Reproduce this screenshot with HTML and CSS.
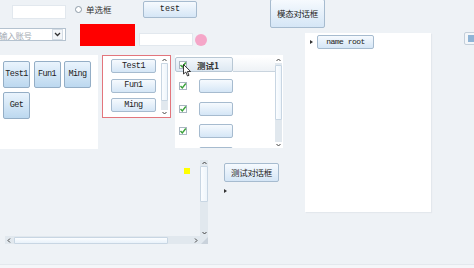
FILE: index.html
```html
<!DOCTYPE html>
<html lang="zh">

<head>
    <meta charset="UTF-8">
    <title>Demo Dialog</title>
    <link rel="stylesheet" href="styles.css">
</head>

<body>
    <div class="form">
        <!-- top row controls -->
        <div class="edit name-edit"></div>

        <label class="radio">
            <span class="radio-dot"></span>
            <span>单选框</span>
        </label>

        <button class="btn test-btn">test</button>
        <button class="btn modal-btn">模态对话框</button>

        <div class="combo">
            <span class="combo-text">输入账号</span>
            <span class="combo-arrow">
                <svg width="7" height="5" viewBox="0 0 7 5"><path d="M1 1 L3.5 3.5 L6 1" fill="none" stroke="#333" stroke-width="1.3"/></svg>
            </span>
        </div>

        <div class="red-box"></div>
        <div class="edit pass-edit"></div>
        <div class="pink-dot"></div>

        <!-- tile buttons -->
        <div class="tile-panel">
            <button class="btn tile">Test1</button>
            <button class="btn tile">Fun1</button>
            <button class="btn tile">Ming</button>
            <button class="btn tile">Get</button>
        </div>

        <!-- list box with red border -->
        <div class="listbox">
            <div class="list-items">
                <button class="btn list-item">Test1</button>
                <button class="btn list-item">Fun1</button>
                <button class="btn list-item">Ming</button>
            </div>
            <div class="vscroll">
                <span class="arrow"><svg width="5" height="4" viewBox="0 0 5 4"><path d="M0.5 3 L2.5 1 L4.5 3" fill="none" stroke="#444" stroke-width="1"/></svg></span>
                <div class="track"><div class="thumb thumb-big"></div></div>
                <span class="arrow"><svg width="5" height="4" viewBox="0 0 5 4"><path d="M0.5 1 L2.5 3 L4.5 1" fill="none" stroke="#444" stroke-width="1"/></svg></span>
            </div>
        </div>

        <!-- check list -->
        <div class="checklist">
            <div class="check-body">
                <div class="check-header">
                    <div class="header-cell">
                        <span class="check"><svg width="8" height="8" viewBox="0 0 8 8"><path d="M1.5 4 L3.3 6 L6.8 1.5" fill="none" stroke="#3aa23a" stroke-width="1.4"/></svg></span>
                        <span class="header-text">测试1</span>
                    </div>
                    <div class="header-rest"></div>
                </div>
                <div class="check-row">
                    <span class="check"><svg width="8" height="8" viewBox="0 0 8 8"><path d="M1.5 4 L3.3 6 L6.8 1.5" fill="none" stroke="#3aa23a" stroke-width="1.4"/></svg></span>
                    <button class="btn row-btn"></button>
                </div>
                <div class="check-row">
                    <span class="check"><svg width="8" height="8" viewBox="0 0 8 8"><path d="M1.5 4 L3.3 6 L6.8 1.5" fill="none" stroke="#3aa23a" stroke-width="1.4"/></svg></span>
                    <button class="btn row-btn"></button>
                </div>
                <div class="check-row">
                    <span class="check"><svg width="8" height="8" viewBox="0 0 8 8"><path d="M1.5 4 L3.3 6 L6.8 1.5" fill="none" stroke="#3aa23a" stroke-width="1.4"/></svg></span>
                    <button class="btn row-btn"></button>
                </div>
                <div class="check-row">
                    <span class="check"></span>
                    <button class="btn row-btn"></button>
                </div>
            </div>
            <div class="vscroll">
                <span class="arrow"><svg width="5" height="4" viewBox="0 0 5 4"><path d="M0.5 3 L2.5 1 L4.5 3" fill="none" stroke="#444" stroke-width="1"/></svg></span>
                <div class="track"><div class="thumb thumb-mid"></div></div>
                <span class="arrow"><svg width="5" height="4" viewBox="0 0 5 4"><path d="M0.5 1 L2.5 3 L4.5 1" fill="none" stroke="#444" stroke-width="1"/></svg></span>
            </div>
        </div>

        <!-- mouse pointer over the header checkbox -->
        <svg class="pointer" width="9" height="13" viewBox="0 0 9 13">
            <path d="M0.5 0.5 L0.5 10 L2.8 8 L4.5 12 L6 11.3 L4.4 7.5 L7.6 7.5 Z" fill="#fff" stroke="#222" stroke-width="0.9"/>
        </svg>

        <!-- scroll area -->
        <div class="scroll-area">
            <div class="scroll-content">
                <span class="yellow-dot"></span>
            </div>
            <div class="vscroll">
                <span class="arrow"><svg width="5" height="4" viewBox="0 0 5 4"><path d="M0.5 3 L2.5 1 L4.5 3" fill="none" stroke="#444" stroke-width="1"/></svg></span>
                <div class="track"><div class="thumb thumb-top"></div></div>
                <span class="arrow"><svg width="5" height="4" viewBox="0 0 5 4"><path d="M0.5 1 L2.5 3 L4.5 1" fill="none" stroke="#444" stroke-width="1"/></svg></span>
            </div>
            <div class="hscroll">
                <span class="arrow"><svg width="4" height="5" viewBox="0 0 4 5"><path d="M3 0.5 L1 2.5 L3 4.5" fill="none" stroke="#444" stroke-width="1"/></svg></span>
                <div class="track"><div class="thumb thumb-wide"></div></div>
                <span class="arrow"><svg width="4" height="5" viewBox="0 0 4 5"><path d="M1 0.5 L3 2.5 L1 4.5" fill="none" stroke="#444" stroke-width="1"/></svg></span>
            </div>
            <div class="grip">
                <svg width="7" height="7" viewBox="0 0 7 7"><path d="M7 0 L7 7 L0 7 Z" fill="#c9d2db"/></svg>
            </div>
        </div>

        <button class="btn dialog-btn">测试对话框</button>
        <span class="tri tri-dialog"></span>

        <!-- tree -->
        <div class="tree">
            <div class="tree-row">
                <span class="tri"></span>
                <button class="btn tree-node">name root</button>
            </div>
        </div>

        <div class="side-btn"><span></span></div>

        <div class="status"></div>
    </div>
</body>

</html>
```

FILE: styles.css
```css
/* Global Styles */
body {
    margin: 0;
    padding: 0;
    background-color: #eef2f6;
    font-family: "Noto Sans CJK SC", sans-serif;
    color: #222;
    overflow: hidden;
}

.form {
    position: relative;
    width: 474px;
    height: 268px;
    overflow: hidden;
}

.form > * {
    position: absolute;
    box-sizing: border-box;
}

/* Common controls */
.btn {
    box-sizing: border-box;
    margin: 0;
    padding: 0;
    border: 1px solid #a6bbcf;
    border-radius: 2px;
    background: linear-gradient(#f6fafe, #d5e6f6);
    font-family: "Liberation Mono", monospace;
    font-size: 8.5px;
    color: #222;
    letter-spacing: -0.5px;
    line-height: 1;
}

.edit {
    background-color: #fff;
    border: 1px solid #e2e8ee;
}

.name-edit {
    left: 12px;
    top: 5px;
    width: 54px;
    height: 14px;
}

.pass-edit {
    left: 139px;
    top: 33px;
    width: 54px;
    height: 13px;
}

.radio {
    left: 75px;
    top: 3px;
    display: flex;
    align-items: center;
    gap: 4px;
    font-size: 8.5px;
    color: #333;
}

.radio-dot {
    width: 7px;
    height: 7px;
    border-radius: 50%;
    border: 1px solid #8c9aa6;
    background-color: #fff;
    box-sizing: border-box;
}

.test-btn {
    left: 143px;
    top: 1px;
    width: 54px;
    height: 17px;
    letter-spacing: 0;
}

.modal-btn {
    left: 270px;
    top: -1px;
    width: 55px;
    height: 29px;
    font-family: "Noto Sans CJK SC", sans-serif;
    letter-spacing: -0.3px;
}

.combo {
    left: -2px;
    top: 28px;
    width: 68px;
    height: 13px;
    background-color: #fff;
    border: 1px solid #b4c2cf;
    display: flex;
    align-items: center;
    justify-content: space-between;
    font-size: 8.5px;
    color: #a3abb3;
}

.combo-text {
    letter-spacing: -0.3px;
}

.combo-arrow {
    display: flex;
    align-items: center;
    justify-content: center;
    width: 9px;
    height: 9px;
    margin-right: 2px;
    border: 1px solid #d5dde5;
    background-color: #f3f6f9;
}

.red-box {
    left: 80px;
    top: 24px;
    width: 55px;
    height: 22px;
    background-color: #ff0000;
}

.pink-dot {
    left: 195px;
    top: 34px;
    width: 12px;
    height: 12px;
    border-radius: 50%;
    background-color: #f5a6c8;
}

/* Tile panel */
.tile-panel {
    left: 0;
    top: 55px;
    width: 98px;
    height: 94px;
    background-color: #fff;
    padding: 6px 0 0 3px;
    display: flex;
    flex-wrap: wrap;
    align-content: flex-start;
    gap: 4px 3.5px;
}

.tile {
    width: 27px;
    height: 27px;
    border-color: #94aec6;
    background: linear-gradient(#eaf4fd, #bcd8ef);
    letter-spacing: -0.6px;
}

/* Red list box */
.listbox {
    left: 102px;
    top: 55px;
    width: 69px;
    height: 63px;
    background-color: #fff;
    border: 1px solid #e3757c;
    display: flex;
    padding: 1px 2px 1px 0;
}

.list-items {
    flex: 1;
    display: flex;
    flex-direction: column;
    gap: 5.5px;
    padding: 2px 0 0 8px;
}

.list-item {
    width: 45px;
    height: 14px;
}

/* Scroll bars */
.vscroll {
    width: 7px;
    display: flex;
    flex-direction: column;
    align-items: center;
    background-color: #e1e8ee;
}

.hscroll {
    height: 8px;
    display: flex;
    align-items: center;
    background-color: #e1e8ee;
}

.arrow {
    display: flex;
    align-items: center;
    justify-content: center;
    flex: none;
    width: 7px;
    height: 6px;
    background-color: #fff;
}

.hscroll .arrow {
    width: 6px;
    height: 8px;
    background-color: transparent;
}

.vscroll .track {
    flex: 1;
    width: 100%;
}

.hscroll .track {
    flex: 1;
    height: 100%;
    display: flex;
    align-items: center;
}

.thumb {
    box-sizing: border-box;
    background: linear-gradient(90deg, #fbfdff, #eef5fb);
    border: 1px solid #c8d6e3;
    border-radius: 1px;
}

.thumb-big {
    height: 80%;
}

.thumb-mid {
    height: 70%;
    margin-top: 2px;
}

.thumb-top {
    height: 57%;
}

.thumb-wide {
    width: 86%;
    height: 7px;
    margin-left: 1px;
    background: linear-gradient(#fbfdff, #e9f2fa);
}

/* Check list */
.checklist {
    left: 175px;
    top: 55px;
    width: 108px;
    height: 93px;
    background-color: #fff;
    display: flex;
    padding-top: 2px;
}

.checklist .vscroll {
    margin-right: 1px;
}

.check-body {
    flex: 1;
    display: flex;
    flex-direction: column;
    gap: 8.5px;
    overflow: hidden;
}

.check-header {
    display: flex;
    height: 15px;
    flex: none;
    margin-bottom: -1.5px;
}

.header-cell {
    width: 58px;
    display: flex;
    align-items: center;
    gap: 10px;
    padding-left: 3px;
    box-sizing: border-box;
    border: 1px solid #b8c7d4;
    border-radius: 2px;
    background: linear-gradient(#f4f8fc, #dde8f2);
}

.header-text {
    font-size: 8.5px;
    font-weight: bold;
    color: #333;
}

.header-rest {
    flex: 1;
    border-bottom: 1px solid #c9d4de;
    background: linear-gradient(#ffffff, #eef2f6);
}

.check-row {
    display: flex;
    align-items: center;
    gap: 12px;
    padding-left: 4px;
    flex: none;
}

.check {
    width: 8px;
    height: 8px;
    flex: none;
    box-sizing: border-box;
    border: 1px solid #a9b6c1;
    background-color: #fff;
    display: flex;
}

.check svg {
    margin: -1px;
}

.row-btn {
    width: 34px;
    height: 14px;
}

.pointer {
    left: 183px;
    top: 64px;
}

/* Scroll area */
.scroll-area {
    left: 5px;
    top: 160px;
    width: 203px;
    height: 84px;
    display: grid;
    grid-template-columns: 1fr 8px;
    grid-template-rows: 1fr 8px;
}

.scroll-area .vscroll {
    width: 8px;
}

.scroll-area .arrow {
    width: 8px;
    background-color: transparent;
}

.scroll-content {
    display: flex;
    justify-content: flex-end;
    align-items: flex-start;
}

.yellow-dot {
    width: 6px;
    height: 6px;
    margin: 8px 10px 0 0;
    background-color: #ffff00;
}

.grip {
    display: flex;
    background-color: #e1e8ee;
    padding: 1px 0 0 1px;
}

.dialog-btn {
    left: 224px;
    top: 163px;
    width: 55px;
    height: 19px;
    font-family: "Noto Sans CJK SC", sans-serif;
    letter-spacing: -0.3px;
}

.tri {
    width: 0;
    height: 0;
    border-top: 2.5px solid transparent;
    border-bottom: 2.5px solid transparent;
    border-left: 3px solid #333;
}

.tri-dialog {
    left: 224px;
    top: 189px;
}

/* Tree */
.tree {
    left: 305px;
    top: 33px;
    width: 126px;
    height: 179px;
    background-color: #fff;
    padding: 2px 0 0 5px;
    box-shadow: 1px 1px 1px #e3e8ed;
}

.tree-row {
    display: flex;
    align-items: center;
    gap: 4px;
}

.tree-node {
    width: 57px;
    height: 14px;
    font-size: 8px;
}

.side-btn {
    left: 464px;
    top: 32px;
    width: 14px;
    height: 13px;
    border: 1px solid #c4cfda;
    border-radius: 2px;
    background-color: #f3f6f9;
    padding: 2px;
}

.side-btn span {
    display: block;
    height: 100%;
    margin-left: 1px;
    background-color: #8fb4d6;
}

.status {
    left: 0;
    top: 264px;
    width: 474px;
    height: 4px;
    border-top: 1px solid #e3e8ed;
    background-color: #f4f6f9;
}
```
